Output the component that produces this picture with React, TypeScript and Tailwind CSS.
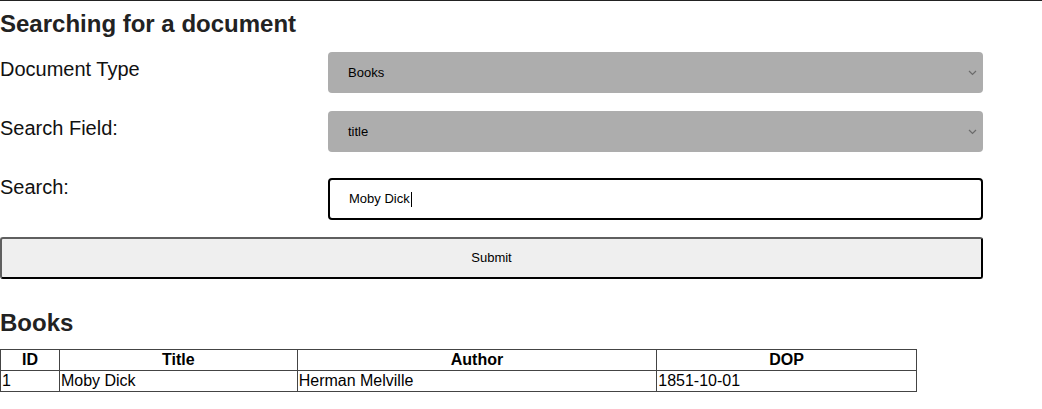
function Chevron() {
  return (
    <svg width="9" height="6" viewBox="0 0 9 6" className="absolute right-[6px] top-1/2 -translate-y-1/2">
      <path d="M1 1 L4.5 4.5 L8 1" fill="none" stroke="#6b6b6b" strokeWidth="1.2" />
    </svg>
  );
}

function SelectBox({ value }: { value: string }) {
  return (
    <div className="relative flex h-[41px] flex-1 items-center rounded-[4px] bg-[#adadad] pl-[20px] text-[13px] text-black">
      {value}
      <Chevron />
    </div>
  );
}

const columns = [
  { label: "ID", w: "w-[59px]" },
  { label: "Title", w: "w-[238px]" },
  { label: "Author", w: "w-[360px]" },
  { label: "DOP", w: "w-[260px]" },
];

const rows = [["1", "Moby Dick", "Herman Melville", "1851-10-01"]];

export default function App() {
  return (
    <div className="min-h-[409px] w-[1042px] border-t border-[#222] bg-white font-['Liberation_Sans',Arial,sans-serif] text-[#111]">
      <h1 className="pt-[9px] text-[24px] leading-[28px] font-bold text-[#222]">Searching for a document</h1>

      <div className="w-[983px]">
        <div className="mt-[14px] flex items-start">
          <label className="w-[328px] pt-[6px] text-[20px] leading-[23px]">Document Type</label>
          <SelectBox value="Books" />
        </div>

        <div className="mt-[18px] flex items-start">
          <label className="w-[328px] pt-[6px] text-[20px] leading-[23px]">Search Field:</label>
          <SelectBox value="title" />
        </div>

        <div className="mt-[24px] flex items-start">
          <label className="w-[328px] text-[20px] leading-[23px]">Search:</label>
          <div className="mt-[2px] flex h-[42px] flex-1 items-center rounded-[4px] border-2 border-black bg-white pl-[19px] text-[13px] text-black">
            Moby Dick
            <span className="ml-[1px] inline-block h-[15px] w-px bg-black" />
          </div>
        </div>

        <button className="mt-[17px] flex h-[42px] w-full items-center justify-center rounded-[3px] border-2 border-t-[#5f5f5f] border-l-[#5f5f5f] border-r-black border-b-black bg-[#efefef] text-[13px] text-black">
          Submit
        </button>
      </div>

      <h2 className="mt-[30px] text-[24px] leading-[28px] font-bold text-[#222]">Books</h2>

      <table className="mt-[12px] w-[917px] border-collapse border border-[#444] text-[16px] leading-[18px] text-black">
        <thead>
          <tr>
            {columns.map((c) => (
              <th key={c.label} className={`${c.w} border border-[#444] px-px py-px text-center font-bold`}>
                {c.label}
              </th>
            ))}
          </tr>
        </thead>
        <tbody>
          {rows.map((r, i) => (
            <tr key={i}>
              {r.map((cell, j) => (
                <td key={j} className="border border-[#444] px-px py-px text-left">
                  {cell}
                </td>
              ))}
            </tr>
          ))}
        </tbody>
      </table>
    </div>
  );
}
